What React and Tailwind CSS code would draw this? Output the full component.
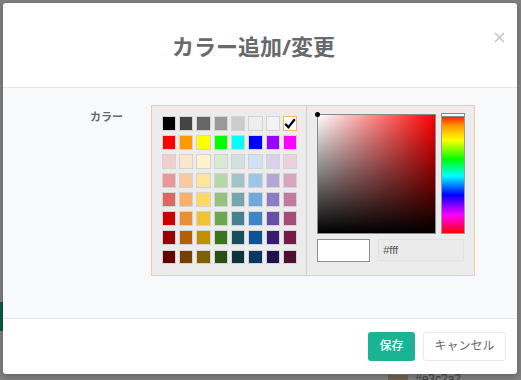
import React from "react";

const rows = [
  ["#000000", "#444444", "#666666", "#999999", "#cccccc", "#eeeeee", "#f3f3f3", "#ffffff"],
  ["#ff0000", "#ff9900", "#ffff00", "#00ff00", "#00ffff", "#0000ff", "#9900ff", "#ff00ff"],
  ["#f4cccc", "#fce5cd", "#fff2cc", "#d9ead3", "#d0e0e3", "#cfe2f3", "#d9d2e9", "#ead1dc"],
  ["#ea9999", "#f9cb9c", "#ffe599", "#b6d7a8", "#a2c4c9", "#9fc5e8", "#b4a7d6", "#d5a6bd"],
  ["#e06666", "#f6b26b", "#ffd966", "#93c47d", "#76a5af", "#6fa8dc", "#8e7cc3", "#c27ba0"],
  ["#cc0000", "#e69138", "#f1c232", "#6aa84f", "#45818e", "#3d85c6", "#674ea7", "#a64d79"],
  ["#990000", "#b45f06", "#bf9000", "#38761d", "#134f5c", "#0b5394", "#351c75", "#741b47"],
  ["#660000", "#783f04", "#7f6000", "#274e13", "#0c343d", "#073763", "#20124d", "#4c1130"],
];

const font = { fontFamily: '"Open Sans", "Noto Sans CJK JP", sans-serif' };

export default function App() {
  const swatches = [];
  rows.forEach((r, ri) =>
    r.forEach((c, ci) => {
      const selected = ri === 0 && ci === 7;
      swatches.push(
        <div
          key={`${ri}-${ci}`}
          className={
            selected
              ? "w-[14.3px] h-[14.7px] border border-[#f5b56b] bg-white flex items-center justify-center"
              : "w-[14.3px] h-[14.7px] border border-[#d3d3d3]"
          }
          style={selected ? undefined : { backgroundColor: c }}
        >
          {selected && (
            <svg width="12" height="11" viewBox="0 0 12 11">
              <path d="M1.2 5.8 L4.4 9.2 L10.8 1.2" fill="none" stroke="#000" strokeWidth="2.2" strokeLinejoin="miter" />
            </svg>
          )}
        </div>
      );
    })
  );

  return (
    <div
      className="relative w-[521px] h-[380px] bg-[#808080] overflow-hidden pt-[3px] pl-[3px]"
      style={font}
    >
      {/* faint page content behind backdrop */}
      <div className="absolute left-0 top-[302px] w-[3px] h-[29px] bg-[#0d5a4a]" />
      <div className="absolute left-[388px] top-[375px] w-[20px] h-[10px] bg-[#71614f]" />
      <div className="absolute left-[415px] top-[372px] text-[12px] text-[#3d3d3d] leading-[14px] font-['Liberation_Sans']">
        #e3c2a2
      </div>

      <div className="relative w-[514px] h-[371px] bg-white rounded-[3px] flex flex-col overflow-hidden shadow-[0_2px_6px_rgba(0,0,0,0.25)]">
        {/* header */}
        <div className="h-[85px] flex border-b border-[#e7e7e7] pl-[12px] pr-[11px]">
          <div className="flex-1 flex items-center justify-center">
            <span className="text-[22px] leading-[26px] font-bold text-[#676a6c] pt-[1px]">
              カラー追加/変更
            </span>
          </div>
          <div className="w-[14px] pt-[29px] flex justify-center">
            <svg width="11" height="11" viewBox="0 0 11 11">
              <path d="M1 1 L10 10 M10 1 L1 10" stroke="#c2c2c2" strokeWidth="1.4" />
            </svg>
          </div>
        </div>

        {/* body */}
        <div className="h-[230px] bg-[#f8f9fa] flex pt-[17px]">
          <div className="w-[120px] text-right pt-[5px] text-[11px] leading-[14px] font-bold text-[#676a6c]">
            カラー
          </div>
          <div className="ml-[28px] h-[171px] flex border border-[#f1cba6] bg-[#ececec]">
            {/* palette */}
            <div className="w-[155px] border-r border-[#cfcfcf] pt-[10px] pl-[9.7px]">
              <div className="grid grid-cols-[repeat(8,14.3px)] gap-x-[3.03px] gap-y-[4.4px]">
                {swatches}
              </div>
            </div>
            {/* picker */}
            <div className="w-[167px] pl-[9.7px] pt-[7px]">
              <div className="flex gap-[5px]">
                <div className="relative mt-[1px] w-[119.5px] h-[119.5px] border border-[#8a8a8a] bg-[linear-gradient(to_right,#ffffff,#ff0000)]">
                  <div className="absolute inset-0 bg-linear-to-t from-black to-transparent" />
                  <div className="absolute -left-[3px] -top-[3px] w-[5px] h-[5px] rounded-full bg-black" />
                </div>
                <div className="relative w-[24px] h-[120.5px] border border-[#9a9a9a] bg-[linear-gradient(to_bottom,#ff0000,#ff9900_10%,#ffff00_22%,#00ff00_38%,#00ffff_52%,#0000ff_68%,#ff00ff_85%,#ff0000)]">
                  <div className="absolute -left-[1px] -right-[1px] -top-[1px] h-[4px] bg-white border border-[#888]" />
                </div>
              </div>
              <div className="flex items-start mt-[5px]">
                <div className="w-[53.5px] h-[23px] bg-white border border-[#8f8f8f]" />
                <div className="ml-[8px] w-[86px] h-[22px] bg-[#ebebeb] border border-[#e2e2e2] text-[11px] leading-[20px] pl-[4px] text-[#555] font-['Liberation_Sans']">
                  #fff
                </div>
              </div>
            </div>
          </div>
        </div>

        {/* footer */}
        <div className="flex-1 border-t border-[#e7e7e7] flex items-center justify-end pr-[11px] gap-[8px] pb-[1px]">
          <button className="h-[29px] w-[47px] rounded-[3px] bg-[#1ab394] text-white text-[12px] font-medium">
            保存
          </button>
          <button className="h-[29px] w-[83px] rounded-[3px] bg-white border border-[#e7eaec] text-[#676a6c] text-[12px]">
            キャンセル
          </button>
        </div>
      </div>
    </div>
  );
}
